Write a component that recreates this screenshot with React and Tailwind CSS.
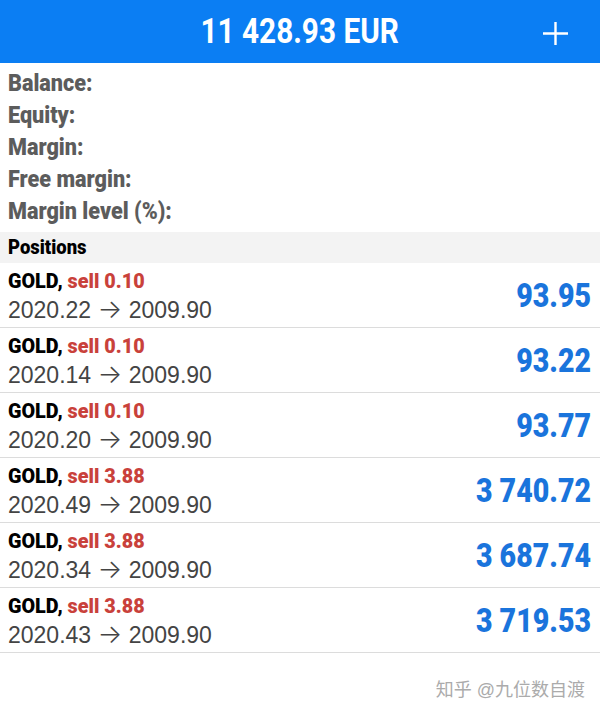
import React from 'react';

// no condensed face installed: Roboto bold squeezed horizontally instead
const COND = { fontFamily: 'Roboto, "Liberation Sans", sans-serif' };
const REGULAR = { fontFamily: '"Liberation Sans", Arial, sans-serif' };
const ARROW = { fontFamily: 'Inter, "DejaVu Sans", sans-serif' };
const CJK = { fontFamily: '"Liberation Sans", "Noto Sans CJK SC", sans-serif' };

const summary = ['Balance:', 'Equity:', 'Margin:', 'Free margin:', 'Margin level (%):'];

const positions = [
  { lot: '0.10', open: '2020.22', close: '2009.90', profit: '93.95' },
  { lot: '0.10', open: '2020.14', close: '2009.90', profit: '93.22' },
  { lot: '0.10', open: '2020.20', close: '2009.90', profit: '93.77' },
  { lot: '3.88', open: '2020.49', close: '2009.90', profit: '3 740.72' },
  { lot: '3.88', open: '2020.34', close: '2009.90', profit: '3 687.74' },
  { lot: '3.88', open: '2020.43', close: '2009.90', profit: '3 719.53' },
];

export default function App() {
  return (
    <div className="w-[600px] h-[715px] bg-white overflow-hidden">
      <header className="relative h-[63px] bg-[#0b7ef3] flex items-center justify-center">
        <h1 className="text-[35px] font-bold text-white leading-none scale-x-[0.85] origin-center" style={COND}>
          11 428.93 EUR
        </h1>
        <svg className="absolute right-[32px] top-[22px]" width="25" height="23" viewBox="0 0 25 23">
          <path d="M12.5 0v23M0 11.5h25" stroke="#fff" strokeWidth="2.4" />
        </svg>
      </header>

      <div className="pt-[4px] pb-[5px]">
        {summary.map((label) => (
          <div key={label} className="h-[32px] flex items-center px-2">
            <span
              className="text-[24px] font-black text-[#5c5c5c] leading-none scale-x-[0.9] origin-left"
              style={COND}
            >
              {label}
            </span>
          </div>
        ))}
      </div>

      <div className="h-[31px] bg-[#f3f3f3] flex items-center px-2">
        <span className="text-[21px] font-black text-black leading-none scale-x-[0.88] origin-left" style={COND}>
          Positions
        </span>
      </div>

      <ul>
        {positions.map((p, i) => (
          <li key={i} className="h-[65px] border-b border-[#dcdcdc] flex items-center justify-between pl-2 pr-[9px]">
            <div className="flex flex-col pt-[1px]">
              <span
                className="text-[21px] font-black leading-[28px] text-black scale-x-[0.94] origin-left"
                style={COND}
              >
                GOLD, <span className="text-[#c9413b]">sell {p.lot}</span>
              </span>
              <span className="text-[23px] leading-[30px] text-[#444]" style={REGULAR}>
                {p.open} <span className="text-[26px] font-light leading-none" style={ARROW}>→</span> {p.close}
              </span>
            </div>
            <span
              className="text-[34px] font-black text-[#1a74dc] leading-none scale-x-[0.84] origin-right"
              style={COND}
            >
              {p.profit}
            </span>
          </li>
        ))}
      </ul>

      <div className="flex justify-end pr-[15px] pt-[24px]">
        <span className="text-[18px] text-[#ababab]" style={CJK}>
          知乎 @九位数自渡
        </span>
      </div>
    </div>
  );
}
